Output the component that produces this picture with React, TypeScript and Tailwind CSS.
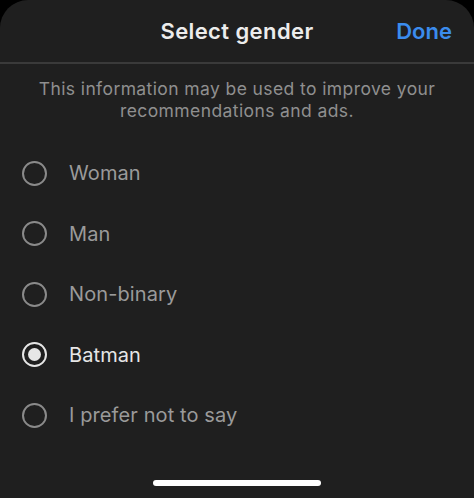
import React from "react";

const options = ["Woman", "Man", "Non-binary", "Batman", "I prefer not to say"];

export default function App() {
  const selected = "Batman";
  return (
    <div className="w-[474px] h-[498px] bg-black overflow-hidden" style={{ fontFamily: "Inter, 'Noto Sans', sans-serif" }}>
      <div className="relative w-full h-full bg-[#1f1f1f] rounded-t-[28px] flex flex-col">
        <div className="h-[62px] flex items-center justify-center relative">
          <span className="text-[22px] font-semibold text-[#ececec] tracking-[0.4px]">Select gender</span>
          <span className="absolute right-[22px] top-[15px] text-[22px] font-semibold text-[#3b8ced]">Done</span>
        </div>
        <div className="h-[2px] bg-[#3a3a3a]" />
        <p className="mt-[14px] px-[20px] text-center text-[17.5px] leading-[22px] tracking-[0.4px] text-[#8f8f8f]">
          This information may be used to improve your recommendations and ads.
        </p>
        <div className="mt-[21px] flex flex-col">
          {options.map((o) => {
            const on = o === selected;
            return (
              <div key={o} className="h-[60.5px] flex items-center pl-[22px]">
                <span
                  className={
                    on
                      ? "w-[25px] h-[25px] rounded-full border-2 border-[#e6e6e6] flex items-center justify-center"
                      : "w-[25px] h-[25px] rounded-full border-2 border-[#8a8a8a]"
                  }
                >
                  {on && <span className="w-[13px] h-[13px] rounded-full bg-[#e6e6e6]" />}
                </span>
                <span className={"ml-[22px] text-[20px] tracking-[0.1px] " + (on ? "text-[#e6e6e6]" : "text-[#9a9a9a]")}>{o}</span>
              </div>
            );
          })}
        </div>
        <div className="absolute left-[153px] bottom-[12px] w-[168px] h-[6px] rounded-full bg-white" />
      </div>
    </div>
  );
}
